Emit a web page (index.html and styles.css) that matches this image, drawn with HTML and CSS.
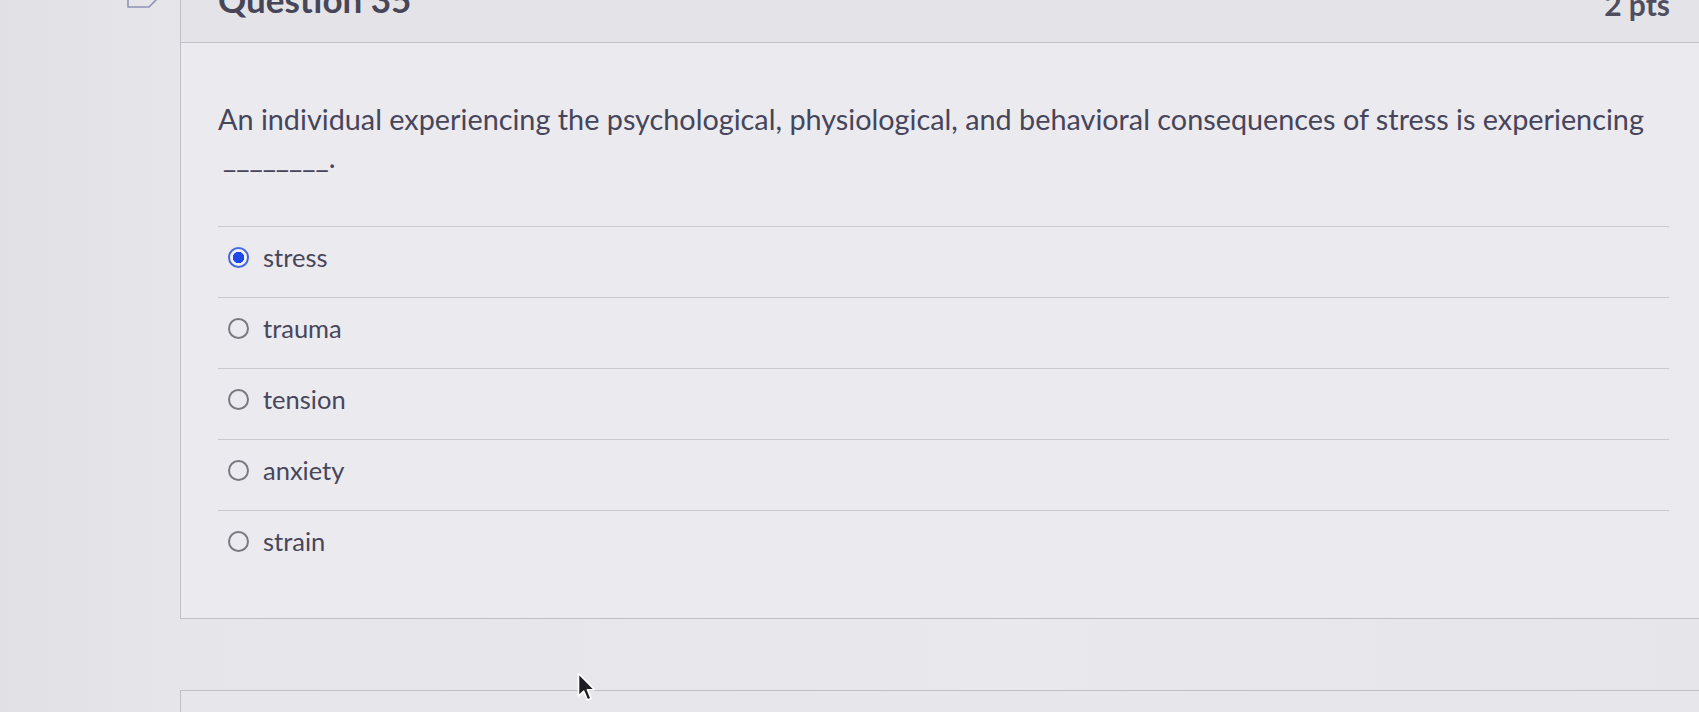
FILE: index.html
```html
<!DOCTYPE html>
<html lang="en">
<head>
    <meta charset="UTF-8">
    <meta name="viewport" content="width=device-width, initial-scale=1.0">
    <title>Quiz - Question 35</title>
    <link rel="stylesheet" href="styles.css">
</head>
<body>
    <div class="page">
        <div class="gutter">
            <!-- flag question marker -->
            <svg class="flag" width="32" height="10" viewBox="0 0 32 10">
                <path d="M1 0 V8 H22 L30 0" fill="none" stroke="#8f92b6" stroke-width="1.6"/>
            </svg>
        </div>

        <div class="quiz">
            <div class="question">
                <div class="question-header">
                    <span class="question-name">Question 35</span>
                    <span class="question-points">2 pts</span>
                </div>

                <div class="question-body">
                    <p class="question-text">An individual experiencing the psychological, physiological, and behavioral consequences of stress is experiencing<br><span class="blank">________.</span></p>

                    <div class="answers">
                        <label class="answer">
                            <span class="radio checked"></span>
                            <span class="answer-label">stress</span>
                        </label>
                        <label class="answer">
                            <span class="radio"></span>
                            <span class="answer-label">trauma</span>
                        </label>
                        <label class="answer">
                            <span class="radio"></span>
                            <span class="answer-label">tension</span>
                        </label>
                        <label class="answer">
                            <span class="radio"></span>
                            <span class="answer-label">anxiety</span>
                        </label>
                        <label class="answer">
                            <span class="radio"></span>
                            <span class="answer-label">strain</span>
                        </label>
                    </div>
                </div>
            </div>

            <div class="question next">
                <div class="question-header"></div>
            </div>
        </div>
    </div>

    <!-- mouse pointer -->
    <svg class="cursor" width="20" height="32" viewBox="0 0 20 32">
        <path d="M1.5 1.5 L1.5 24 L6.8 19.2 L10.5 28 L14 26.4 L10.4 17.8 L17.5 17.6 Z" fill="#1c1c22" stroke="#ffffff" stroke-width="1.6" stroke-linejoin="round"/>
    </svg>
</body>
</html>
```

FILE: styles.css
```css
body {
    margin: 0;
    font-family: 'Lato', 'Noto Sans', sans-serif;
    color: #46455a;
    background: linear-gradient(90deg, #e1e0e5 0%, #e6e5ea 10%, #e9e8ed 60%, #e6e5ea 100%);
    height: 712px;
    overflow: hidden;
}

.page {
    display: flex;
}

.gutter {
    width: 180px;
    flex-shrink: 0;
}

.flag {
    display: block;
    margin-left: 127px;
    margin-top: -1px;
}

.quiz {
    flex: 1;
    min-width: 0;
}

.question {
    border-left: 1px solid #c0bfc6;
    border-bottom: 1px solid #c0bfc6;
    background: #ebeaef;
}

.question-header {
    height: 42px;
    display: flex;
    justify-content: space-between;
    align-items: flex-start;
    padding: 0 29px 0 37px;
    background: #e4e3e8;
    border-bottom: 1px solid #c3c2c8;
}

.question-name {
    font-size: 35px;
    font-weight: 700;
    line-height: 1;
    margin-top: -18px;
    color: #474659;
}

.question-points {
    font-size: 30px;
    font-weight: 700;
    line-height: 1;
    margin-top: -11px;
    color: #4f4e60;
}

.question-body {
    padding: 57px 30px 37px 37px;
}

.question-text {
    margin: 0 0 50px;
    font-size: 28.8px;
    line-height: 38px;
}

.blank {
    margin-left: 5px;
}

.answer {
    display: flex;
    align-items: center;
    gap: 14px;
    height: 36px;
    padding: 12px 0 22px 10px;
    border-top: 1px solid #cac9cf;
    font-size: 25.5px;
}

.radio {
    width: 21px;
    height: 21px;
    box-sizing: border-box;
    border: 2px solid #7a7982;
    border-radius: 50%;
    flex-shrink: 0;
}

.radio.checked {
    border: 2.5px solid #4668de;
    background: radial-gradient(circle, #1c49e8 0 5.4px, #f2f2f7 6px);
}

.answer-label {
    color: #47465a;
}

.question.next {
    margin-top: 71px;
    border-top: 1px solid #c0bfc6;
    border-bottom: none;
}

.question.next .question-header {
    border-bottom: none;
    background: #e7e6eb;
}

.cursor {
    position: absolute;
    left: 577px;
    top: 672px;
}
```
